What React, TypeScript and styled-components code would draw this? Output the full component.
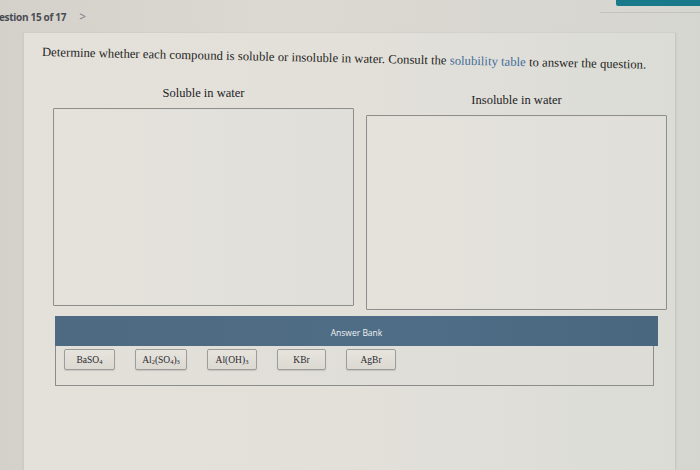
import React from "react";
import styled, { createGlobalStyle } from "styled-components";

const Global = createGlobalStyle`
  html, body { margin: 0; padding: 0; }
  body { width: 700px; height: 470px; overflow: hidden; background: #d6d3cd; }
`;

const Screen = styled.div`
  width: 700px;
  height: 470px;
  overflow: hidden;
  position: relative;
  background: linear-gradient(90deg, #d4d0ca 0%, #dcd8d2 40%, #d6d6d0 100%);
  display: flex;
  flex-direction: column;
`;

const Header = styled.div`
  height: 33px;
  display: flex;
  align-items: flex-start;
  flex-shrink: 0;
`;

const NavText = styled.div`
  margin-top: 8px;
  margin-left: -15px;
  font-family: "Open Sans", "Noto Sans", sans-serif;
  font-size: 10px;
  font-weight: 700;
  letter-spacing: -0.3px;
  color: #4a4c52;
  display: flex;
  align-items: center;
  gap: 13px;
  flex: 1;
`;

const Chevron = styled.span`
  color: #7a7d84;
  font-size: 12px;
  font-weight: 400;
`;

const TopRight = styled.div`
  width: 100px;
  height: 12px;
  border-bottom: 1px solid #c4c2bc;
  display: flex;
  justify-content: flex-end;
`;

const TealButton = styled.div`
  width: 84px;
  height: 6px;
  background: #17798a;
  border-bottom-left-radius: 2px;
`;

const Body = styled.div`
  flex: 1;
  display: flex;
  padding-left: 23px;
  padding-right: 24px;
`;

const Panel = styled.div`
  flex: 1;
  background: linear-gradient(90deg, #e4e1db 0%, #e3e0da 50%, #dbdcd6 100%);
  border-left: 1px solid #cfccc6;
  border-right: 1px solid #c8c8c2;
  box-shadow: 0 0 2px rgba(0, 0, 0, 0.08);
  padding: 12px 8px 0 18px;
  display: flex;
  flex-direction: column;
`;

const Question = styled.p`
  margin: 0;
  font-family: "Liberation Serif", "Times New Roman", serif;
  font-size: 12.6px;
  color: #1f1f22;
  letter-spacing: 0.05px;
  transform: rotate(1.2deg);
  transform-origin: left center;
  white-space: nowrap;
`;

const Link = styled.span`
  color: #3f6b9a;
`;

const Columns = styled.div`
  display: flex;
  gap: 12px;
  margin-top: 26px;
  padding-left: 11px;
`;

const Column = styled.div<{ $offset: number }>`
  flex: 1;
  display: flex;
  flex-direction: column;
  align-items: center;
  margin-top: ${(p) => p.$offset}px;
`;

const ColTitle = styled.div`
  font-family: "Liberation Serif", "Times New Roman", serif;
  font-size: 12.5px;
  color: #222226;
  height: 18px;
`;

const DropBox = styled.div<{ $h: number }>`
  align-self: stretch;
  height: ${(p) => p.$h}px;
  margin-top: 4px;
  border: 1px solid #8e8e8c;
  border-radius: 1px;
  background: linear-gradient(90deg, #e5e2dc, #e0dfd9);
  box-shadow: inset 0 0 1px rgba(0, 0, 0, 0.1);
`;

const Bank = styled.div`
  margin-top: 6px;
  margin-left: 13px;
  margin-right: 9px;
  display: flex;
  flex-direction: column;
`;

const BankHeader = styled.div`
  height: 30px;
  background: linear-gradient(90deg, #4e6a82, #4f6d86 60%, #4a6780);
  display: flex;
  align-items: center;
  justify-content: center;
  font-family: "Open Sans", "Noto Sans", sans-serif;
  font-size: 8.5px;
  color: #f0f2f4;
  padding-top: 2px;
  box-sizing: border-box;
`;

const BankBody = styled.div`
  height: 40px;
  margin-right: 4px;
  border: 1px solid #8c8c8a;
  border-top: none;
  background: linear-gradient(90deg, #e3e0da, #dddcd6);
  display: flex;
  align-items: flex-start;
  padding: 3px 0 0 8px;
  gap: 20px;
  box-sizing: border-box;
`;

const Chip = styled.div<{ $w: number }>`
  width: ${(p) => p.$w}px;
  height: 21px;
  box-sizing: border-box;
  border: 1px solid #9c9c9a;
  border-radius: 2px;
  background: linear-gradient(180deg, #e7e4de, #dcd9d3);
  box-shadow: 0 1px 1px rgba(0, 0, 0, 0.12);
  display: flex;
  align-items: center;
  justify-content: center;
  font-family: "Liberation Serif", "Times New Roman", serif;
  font-size: 9.5px;
  color: #2a2a2e;
  white-space: nowrap;
`;

const Sub = styled.span`
  font-size: 6.5px;
  position: relative;
  top: 2px;
`;

export default function App() {
  return (
    <>
      <Global />
      <Screen>
        <Header>
          <NavText>
            <span>Question 15 of 17</span>
            <Chevron>&gt;</Chevron>
          </NavText>
          <TopRight>
            <TealButton />
          </TopRight>
        </Header>
        <Body>
          <Panel>
            <Question>
              Determine whether each compound is soluble or insoluble in water. Consult the{" "}
              <Link>solubility table</Link> to answer the question.
            </Question>
            <Columns>
              <Column $offset={0}>
                <ColTitle>Soluble in water</ColTitle>
                <DropBox $h={196} />
              </Column>
              <Column $offset={7}>
                <ColTitle>Insoluble in water</ColTitle>
                <DropBox $h={193} />
              </Column>
            </Columns>
            <Bank>
              <BankHeader>Answer Bank</BankHeader>
              <BankBody>
                <Chip $w={51}>
                  BaSO<Sub>4</Sub>
                </Chip>
                <Chip $w={52}>
                  Al<Sub>2</Sub>(SO<Sub>4</Sub>)<Sub>3</Sub>
                </Chip>
                <Chip $w={50}>
                  Al(OH)<Sub>3</Sub>
                </Chip>
                <Chip $w={49}>KBr</Chip>
                <Chip $w={50}>AgBr</Chip>
              </BankBody>
            </Bank>
          </Panel>
        </Body>
      </Screen>
    </>
  );
}
